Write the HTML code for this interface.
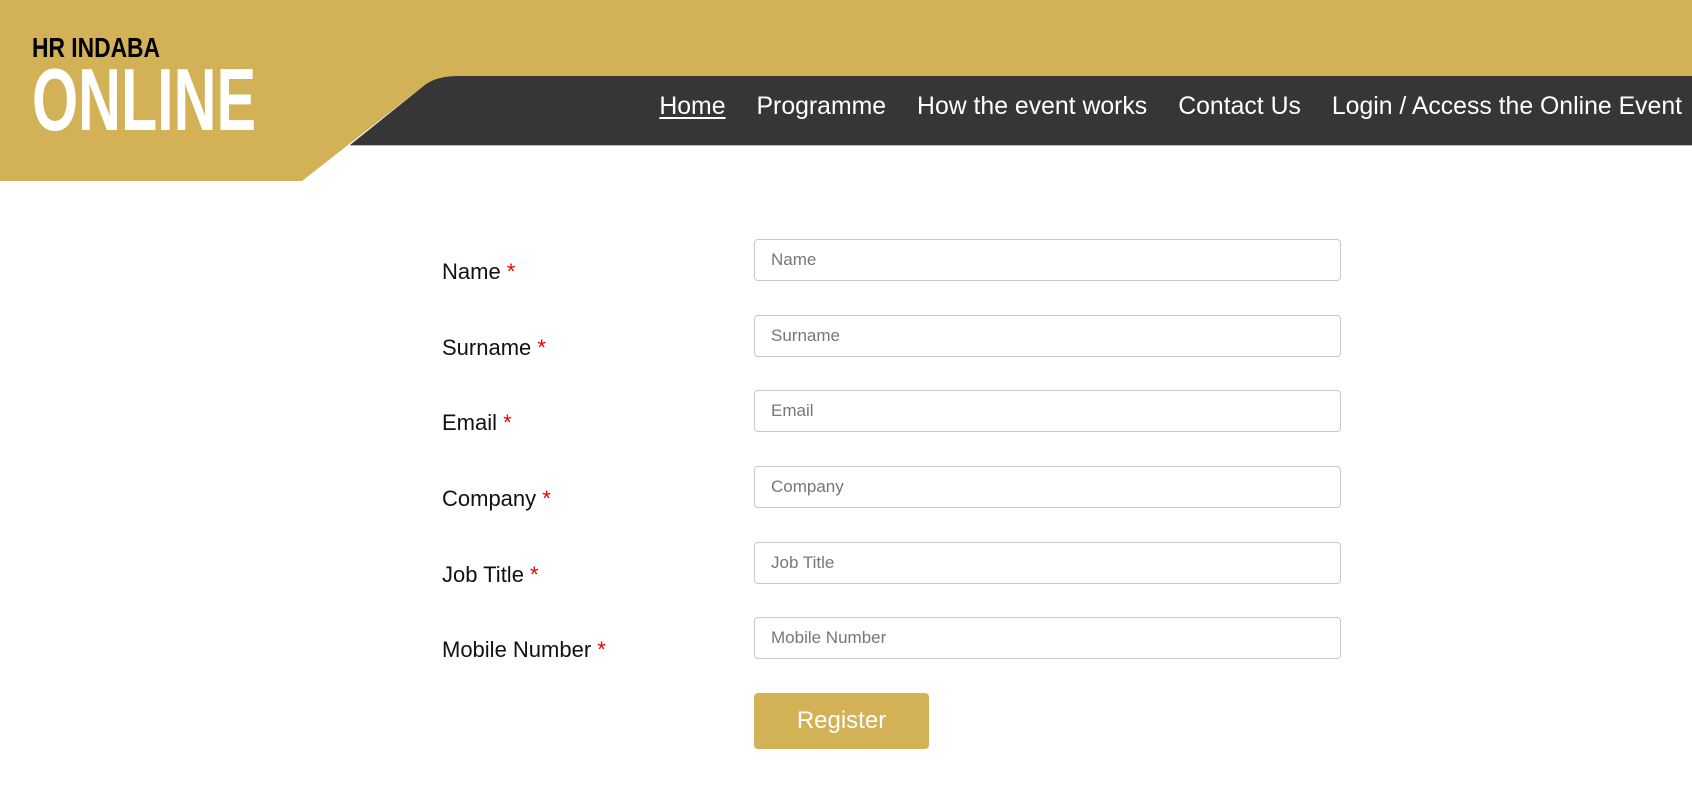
<!DOCTYPE html>
<html><head><meta charset="utf-8"><style>
*{margin:0;padding:0;box-sizing:border-box}
body{width:1692px;height:786px;background:#fff;font-family:"Liberation Sans",Arial,sans-serif;position:relative;overflow:hidden}
svg.hdr{position:absolute;left:0;top:0}
.nav{position:absolute;top:72px;height:69px;right:10px;display:flex;align-items:center;gap:31px;color:#fff;font-size:24.8px}
.nav span:first-child{text-decoration:underline;text-underline-offset:3px}
.lbl{position:absolute;left:442px;font-size:22px;color:#111}
.lbl b{color:#e00;font-weight:normal}
.inp{position:absolute;left:754px;width:587px;height:42px;border:1px solid #c8c8c8;border-radius:4px;padding-left:16px;font-size:17px;color:#777;line-height:40px}
.btn{position:absolute;left:754px;top:693px;width:175px;height:56px;background:#d3b156;border-radius:4px;color:#fff;font-size:24px;text-align:center;line-height:56px}
</style></head><body>
<svg class="hdr" width="1692" height="190" viewBox="0 0 1692 190">
<path d="M0 0H1692V76H458Q438 76 426 84L302 181H0Z" fill="#d3b156"/>
<path d="M458 76H1692V145H350L426 84Q438 76 458 76Z" fill="#363636"/>
<line x1="350" y1="145.5" x2="1692" y2="145.5" stroke="#bbb" stroke-width="1"/>
<text x="32" y="57" font-family="Liberation Sans Narrow, Liberation Sans, sans-serif" font-weight="bold" font-size="28" textLength="128" lengthAdjust="spacingAndGlyphs" fill="#000">HR INDABA</text>
<text x="32" y="130" font-family="Liberation Sans Narrow, Liberation Sans, sans-serif" font-weight="bold" font-size="88" textLength="224" lengthAdjust="spacingAndGlyphs" fill="#fff">ONLINE</text>
</svg>
<div class="nav"><span>Home</span><span>Programme</span><span>How the event works</span><span>Contact Us</span><span>Login / Access the Online Event</span></div>

<div class="lbl" style="top:259px">Name <b>*</b></div><div class="inp" style="top:239px">Name</div>
<div class="lbl" style="top:335px">Surname <b>*</b></div><div class="inp" style="top:315px">Surname</div>
<div class="lbl" style="top:410px">Email <b>*</b></div><div class="inp" style="top:390px">Email</div>
<div class="lbl" style="top:486px">Company <b>*</b></div><div class="inp" style="top:466px">Company</div>
<div class="lbl" style="top:562px">Job Title <b>*</b></div><div class="inp" style="top:542px">Job Title</div>
<div class="lbl" style="top:637px">Mobile Number <b>*</b></div><div class="inp" style="top:617px">Mobile Number</div>
<div class="btn">Register</div>
</body></html>
